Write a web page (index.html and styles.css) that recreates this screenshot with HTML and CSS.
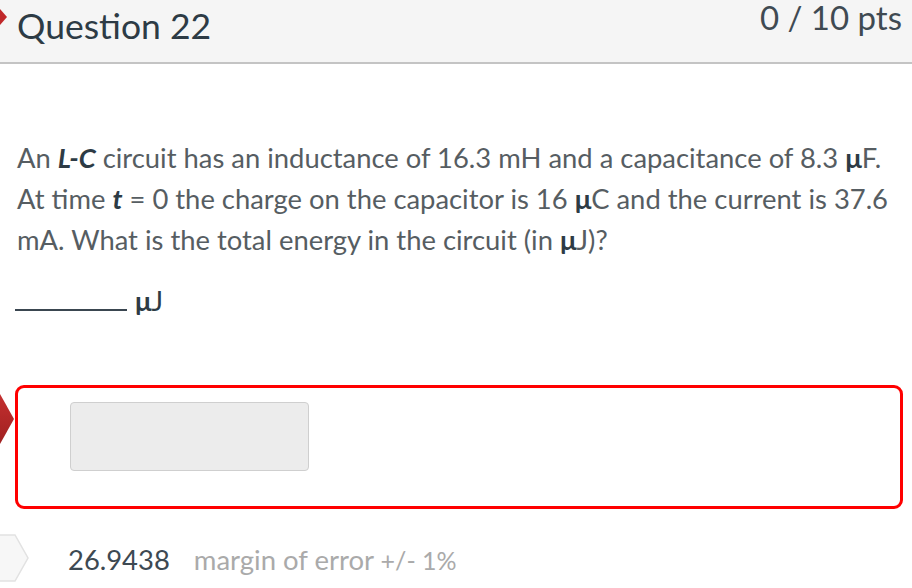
FILE: index.html
```html
<!DOCTYPE html>
<html>
<head>
<meta charset="utf-8">
<link rel="stylesheet" href="styles.css">
</head>
<body>
<div class="page">
  <div class="header">
    <svg class="flag" width="8" height="16" viewBox="0 0 8 16"><polygon points="0,0 7,8 0,16" fill="#c0282a"/></svg>
    <div class="title">Question 22</div>
    <div class="pts">0 / 10 pts</div>
  </div>
  <div class="qtext">
    <p class="para">An <b><i>L-C</i></b> circuit has an inductance of 16.3 mH and a capacitance of 8.3 <b>μ</b>F. At time <b><i>t</i></b> = 0 the charge on the capacitor is 16 <b>μ</b>C and the current is 37.6 mA. What is the total energy in the circuit (in <b>μ</b>J)?</p>
    <p class="blank"><span class="line"></span><span class="unit"><b>μ</b>J</span></p>
  </div>
  <div class="answer-wrap">
    <svg class="arrow" width="16" height="50" viewBox="0 0 16 50"><defs><linearGradient id="g" x1="0" y1="0" x2="0" y2="1"><stop offset="0" stop-color="#c43030"/><stop offset="1" stop-color="#a02020"/></linearGradient></defs><polygon points="0,0 14,25 0,50" fill="url(#g)"/></svg>
    <div class="answer-box">
      <div class="input"></div>
    </div>
  </div>
  <div class="correct">
    <svg class="hex" width="30" height="48" viewBox="0 0 30 48"><polygon points="-2,1 15,1 28,24 15,47 -2,47" fill="#f7f7f7" stroke="#e2e2e2" stroke-width="1.5"/></svg>
    <span class="value">26.9438</span>
    <span class="margin">margin of error <span class="small">+/- 1%</span></span>
  </div>
</div>
</body>
</html>
```
FILE: styles.css
```css
html, body {
  margin: 0;
  padding: 0;
  background: #ffffff;
}
body {
  font-family: Lato, "Noto Sans", sans-serif;
  width: 912px;
  height: 588px;
  overflow: hidden;
}
.page {
  position: relative;
}
.header {
  position: relative;
  height: 62px;
  background: #f5f5f5;
  border-bottom: 2px solid #c4c4c4;
  display: flex;
  justify-content: space-between;
  align-items: flex-start;
  padding: 0 10px 0 17px;
}
.flag {
  position: absolute;
  left: 0;
  top: 9px;
}
.title {
  font-size: 35.5px;
  color: #2d3b45;
  line-height: 1;
  padding-top: 8px;
}
.pts {
  font-size: 33px;
  color: #3f4a52;
  line-height: 1.2;
  margin-top: -2px;
}
.qtext {
  padding: 73px 6px 0 17px;
  color: #565d62;
  font-size: 27.4px;
}
.para {
  margin: 0;
  line-height: 41px;
}
.para b {
  color: #2d3b45;
}
.blank {
  margin: 26px 0 0 -2px;
  line-height: 30px;
  display: flex;
  align-items: baseline;
}
.line {
  display: inline-block;
  width: 112px;
  border-bottom: 2px solid #3a4650;
  margin-right: 8px;
}
.unit {
  font-size: 27.4px;
  color: #2d3b45;
}
.answer-wrap {
  position: relative;
  margin: 69px 9px 0 15px;
}
.arrow {
  position: absolute;
  left: -15px;
  top: 9px;
}
.answer-box {
  height: 104px;
  border: 3px solid #ff0000;
  border-radius: 9px;
  padding: 14px 0 0 52px;
}
.input {
  width: 237px;
  height: 67px;
  background: #ececec;
  border: 1px solid #cfcfcf;
  border-radius: 4px;
}
.correct {
  position: relative;
  margin-top: 25px;
  padding-left: 68px;
  height: 50px;
  display: flex;
  align-items: center;
}
.hex {
  position: absolute;
  left: 0;
  top: 0;
}
.value {
  font-size: 27.4px;
  color: #3d4952;
}
.margin {
  font-size: 27.5px;
  color: #aaaaaa;
  margin-left: 24px;
}
.small {
  font-size: 25px;
}
```
